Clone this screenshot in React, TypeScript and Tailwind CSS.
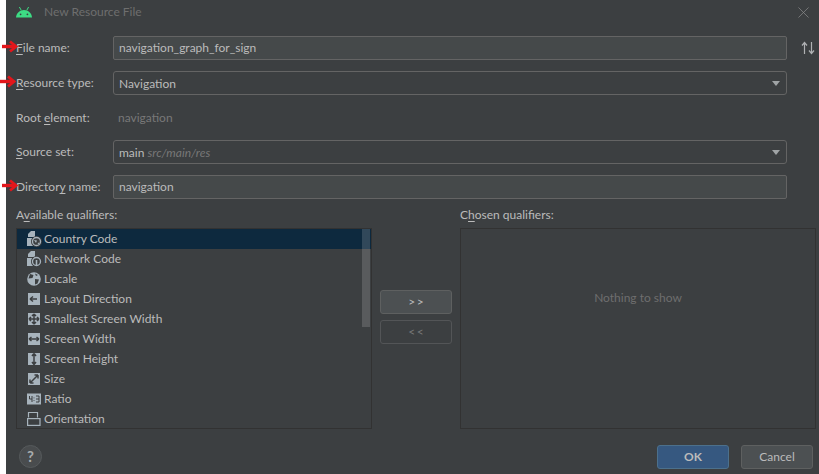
import type { ReactNode } from 'react';
import { X } from 'lucide-react';

const qualifiers: { name: string; icon: ReactNode }[] = [
  { name: 'Country Code', icon: <SimIcon /> },
  { name: 'Network Code', icon: <SimIcon network /> },
  { name: 'Locale', icon: <GlobeIcon /> },
  { name: 'Layout Direction', icon: <SquareIcon d="M4 8h7M4 8l3-2.5M4 8l3 2.5" /> },
  { name: 'Smallest Screen Width', icon: <SquareIcon d="M3 8h10M8 3v10M3 8l2-2M3 8l2 2M13 8l-2-2M13 8l-2 2M8 3L6 5M8 3l2 2M8 13l-2-2M8 13l2-2" /> },
  { name: 'Screen Width', icon: <SquareIcon d="M3 8h10M3 8l2.5-2M3 8l2.5 2M13 8l-2.5-2M13 8l-2.5 2" /> },
  { name: 'Screen Height', icon: <SquareIcon d="M8 2.5v11M8 2.5L6 5M8 2.5L10 5M8 13.5L6 11M8 13.5L10 11" /> },
  { name: 'Size', icon: <SquareIcon d="M4 12l8-8M12 4H8.5M12 4v3.5M4 12h3.5M4 12V8.5" /> },
  { name: 'Ratio', icon: <RatioIcon /> },
  { name: 'Orientation', icon: <OrientationIcon /> }
];

function SimIcon({ network }: { network?: boolean }) {
  return (
    <svg width="16" height="16" viewBox="0 0 16 16">
      <path d="M5 0h4v6H2V3z" fill="#a7b3bc" />
      <path d="M1 7h8v8H1z" fill="#a7b3bc" />
      <circle cx="10.5" cy="10.5" r="5.5" fill="#3c3f41" />
      <circle cx="10.5" cy="10.5" r="4" fill="none" stroke="#a7b3bc" strokeWidth="1.3" />
      {network ? (
        <path d="M10.5 9v5" stroke="#a7b3bc" strokeWidth="1.6" />
      ) : (
        <path d="M8 9l3 .5-1 2.5zM11.5 12l2-.5-1 2z" fill="#a7b3bc" />
      )}
    </svg>
  );
}

function GlobeIcon() {
  return (
    <svg width="16" height="16" viewBox="0 0 16 16">
      <circle cx="8" cy="8" r="6.8" fill="#a7b3bc" />
      <path d="M4 3l3.5 1-1 3-4 .5zM9 8l4 .5-1.5 4-2.5 1zM9 2.5l3 1.5-2 1z" fill="#3c3f41" />
    </svg>
  );
}

function SquareIcon({ d }: { d: string }) {
  return (
    <svg width="16" height="16" viewBox="0 0 16 16">
      <rect x="2" y="2" width="12" height="12" fill="#a7b3bc" />
      <path d={d} fill="none" stroke="#3c3f41" strokeWidth="1.5" />
    </svg>
  );
}

function RatioIcon() {
  return (
    <svg width="16" height="16" viewBox="0 0 16 16">
      <rect x="1" y="2.5" width="14" height="11" fill="#a7b3bc" />
      <path d="M3.5 5v3h2.5M6 5v6M8 6.5v.8M8 9v.8M10 5h3v6h-3M10 8h3" fill="none" stroke="#3c3f41" strokeWidth="1" />
    </svg>
  );
}

function OrientationIcon() {
  return (
    <svg width="16" height="16" viewBox="0 0 16 16">
      <path d="M2.5 6.5V1.5h9v5" fill="none" stroke="#a7b3bc" strokeWidth="1.2" />
      <rect x="1.6" y="7.6" width="12.4" height="6.8" fill="none" stroke="#a7b3bc" strokeWidth="1.2" />
    </svg>
  );
}

function AndroidLogo() {
  return (
    <svg width="16" height="12" viewBox="0 0 16 12">
      <path d="M0 11.5C.3 7.2 3.6 4 8 4s7.7 3.2 8 7.5z" fill="#3ddc84" />
      <path d="M3.4 1l1.8 3.2M12.6 1l-1.8 3.2" stroke="#3ddc84" strokeWidth="1" fill="none" />
      <circle cx="4.6" cy="8.3" r=".9" fill="#3c3f41" />
      <circle cx="11.4" cy="8.3" r=".9" fill="#3c3f41" />
    </svg>
  );
}

function RedArrow({ long }: { long?: boolean }) {
  return (
    <svg width="16" height="13" viewBox="0 0 16 13" className={`absolute top-[1px] ${long ? 'left-[-16px]' : 'left-[-14px]'}`}>
      <path d="M0 6.5h13" fill="none" stroke="#e3161b" strokeWidth="3.4" />
      <path d="M8 1.5l6 5-6 5" fill="none" stroke="#e3161b" strokeWidth="2.8" />
    </svg>
  );
}

function Label({ pre, u, post, arrow, long }: { pre: string; u: string; post: string; arrow?: boolean; long?: boolean }) {
  return (
    <span className="relative w-[97px] shrink-0 whitespace-pre">
      {arrow && <RedArrow long={long} />}
      {pre}
      <span className="underline underline-offset-2">{u}</span>
      {post}
    </span>
  );
}

function TextField({ value }: { value: string }) {
  return (
    <div className="flex h-6 w-[674px] items-center rounded-[2px] border border-[#646464] bg-[#45494a] px-[5px] text-[#bbbbbb]">
      {value}
    </div>
  );
}

function Combo({ children }: { children: ReactNode }) {
  return (
    <div className="flex h-6 w-[674px] items-center justify-between rounded-[3px] border border-[#646464] bg-[#3c3f41] pl-[5px] pr-[6px] text-[#bbbbbb]">
      <span className="pt-px">{children}</span>
      <span className="h-0 w-0 border-x-[4.5px] border-t-[5px] border-x-transparent border-t-[#a0a4a6]" />
    </div>
  );
}

export default function App() {
  return (
    <div className="flex h-[474px] w-[819px] overflow-hidden bg-white font-['Lato',sans-serif] text-[12px] text-[#bbbbbb]">
      <div className="w-[6px] shrink-0" />
      <div className="relative flex min-w-0 flex-1 flex-col bg-[#3c3f41]">
        <header className="flex h-6 items-center pl-[10px] pr-[6px]">
          <AndroidLogo />
          <span className="ml-3 text-[#6e6e6e]">New Resource File</span>
          <X className="ml-auto h-[19px] w-[19px] text-[#8c8c8c]" strokeWidth={0.9} />
        </header>

        <div className="flex flex-col pl-[10px]">
          <div className="mt-3 flex items-center">
            <Label pre="" u="F" post="ile name:" arrow />
            <TextField value="navigation_graph_for_sign" />
            <span className="ml-[14px] flex text-[#afb1b3]">
              <svg width="14" height="14" viewBox="0 0 14 14">
                <path d="M3.5 13V2M1 4.5l2.5-3 2.5 3M10.5 1v11M8 9.5l2.5 3 2.5-3" fill="none" stroke="currentColor" strokeWidth="1.2" />
              </svg>
            </span>
          </div>
          <div className="mt-[11px] flex items-center">
            <Label pre="" u="R" post="esource type:" arrow long />
            <Combo>Navigation</Combo>
          </div>
          <div className="mt-[14px] flex h-[18px] items-center">
            <Label pre="Root " u="e" post="lement:" />
            <span className="pl-[5px] text-[#787878]">navigation</span>
          </div>
          <div className="mt-[13px] flex items-center">
            <Label pre="" u="S" post="ource set:" />
            <Combo>
              main <i className="text-[#787878]">src/main/res</i>
            </Combo>
          </div>
          <div className="mt-[11px] flex items-center">
            <Label pre="Director" u="y" post=" name:" arrow />
            <TextField value="navigation" />
          </div>

          <div className="mt-[7px] flex">
            <div className="flex w-[356px] flex-col">
              <span className="h-[22px] whitespace-pre">
                A<span className="underline underline-offset-2">v</span>ailable qualifiers:
              </span>
              <div className="relative h-[201px] border border-[#323232] bg-[#3c3f41]">
                <ul className="flex h-full flex-col overflow-hidden">
                  {qualifiers.map((item, index) => (
                    <li
                      key={item.name}
                      className={`flex h-5 shrink-0 items-center pl-[9px] ${index === 0 ? 'bg-[#0d293e]' : ''}`}
                    >
                      <span className="flex w-[16px] shrink-0 justify-center">{item.icon}</span>
                      <span className="ml-[2px]">{item.name}</span>
                    </li>
                  ))}
                </ul>
                <div className="absolute right-px top-0 h-[98px] w-2 bg-white/15" />
              </div>
            </div>

            <div className="flex w-[88px] flex-col items-center gap-[6px] pt-[84px]">
              <button className="flex h-6 w-[72px] items-center justify-center rounded-[3px] border border-[#5e6060] bg-[#4c5052] text-[#bbbbbb]">
                &gt;&thinsp;&gt;
              </button>
              <button className="flex h-6 w-[72px] items-center justify-center rounded-[3px] border border-[#535557] text-[#777777]">
                &lt;&thinsp;&lt;
              </button>
            </div>

            <div className="flex w-[356px] flex-col">
              <span className="h-[22px] whitespace-pre">
                C<span className="underline underline-offset-2">h</span>osen qualifiers:
              </span>
              <div className="flex h-[201px] justify-center border border-[#323232] pt-[60px] text-[#6e6e6e]">
                Nothing to show
              </div>
            </div>
          </div>
        </div>

        <footer className="flex flex-1 items-center pl-[13px] pr-[6px] pt-[10px]">
          <span className="flex h-[23px] w-[23px] items-center justify-center rounded-full border border-[#565a5c] bg-[#494c4e] text-[15px] font-bold text-[#a8abad]">
            ?
          </span>
          <button className="ml-auto flex h-6 w-[72px] items-center justify-center rounded-[3px] border border-[#4c708c] bg-[#365880] font-bold text-[#bbbbbb]">
            OK
          </button>
          <button className="ml-3 flex h-6 w-[72px] items-center justify-center rounded-[3px] border border-[#5e6060] bg-[#4c5052] text-[#bbbbbb]">
            Cancel
          </button>
        </footer>
      </div>
    </div>
  );
}
